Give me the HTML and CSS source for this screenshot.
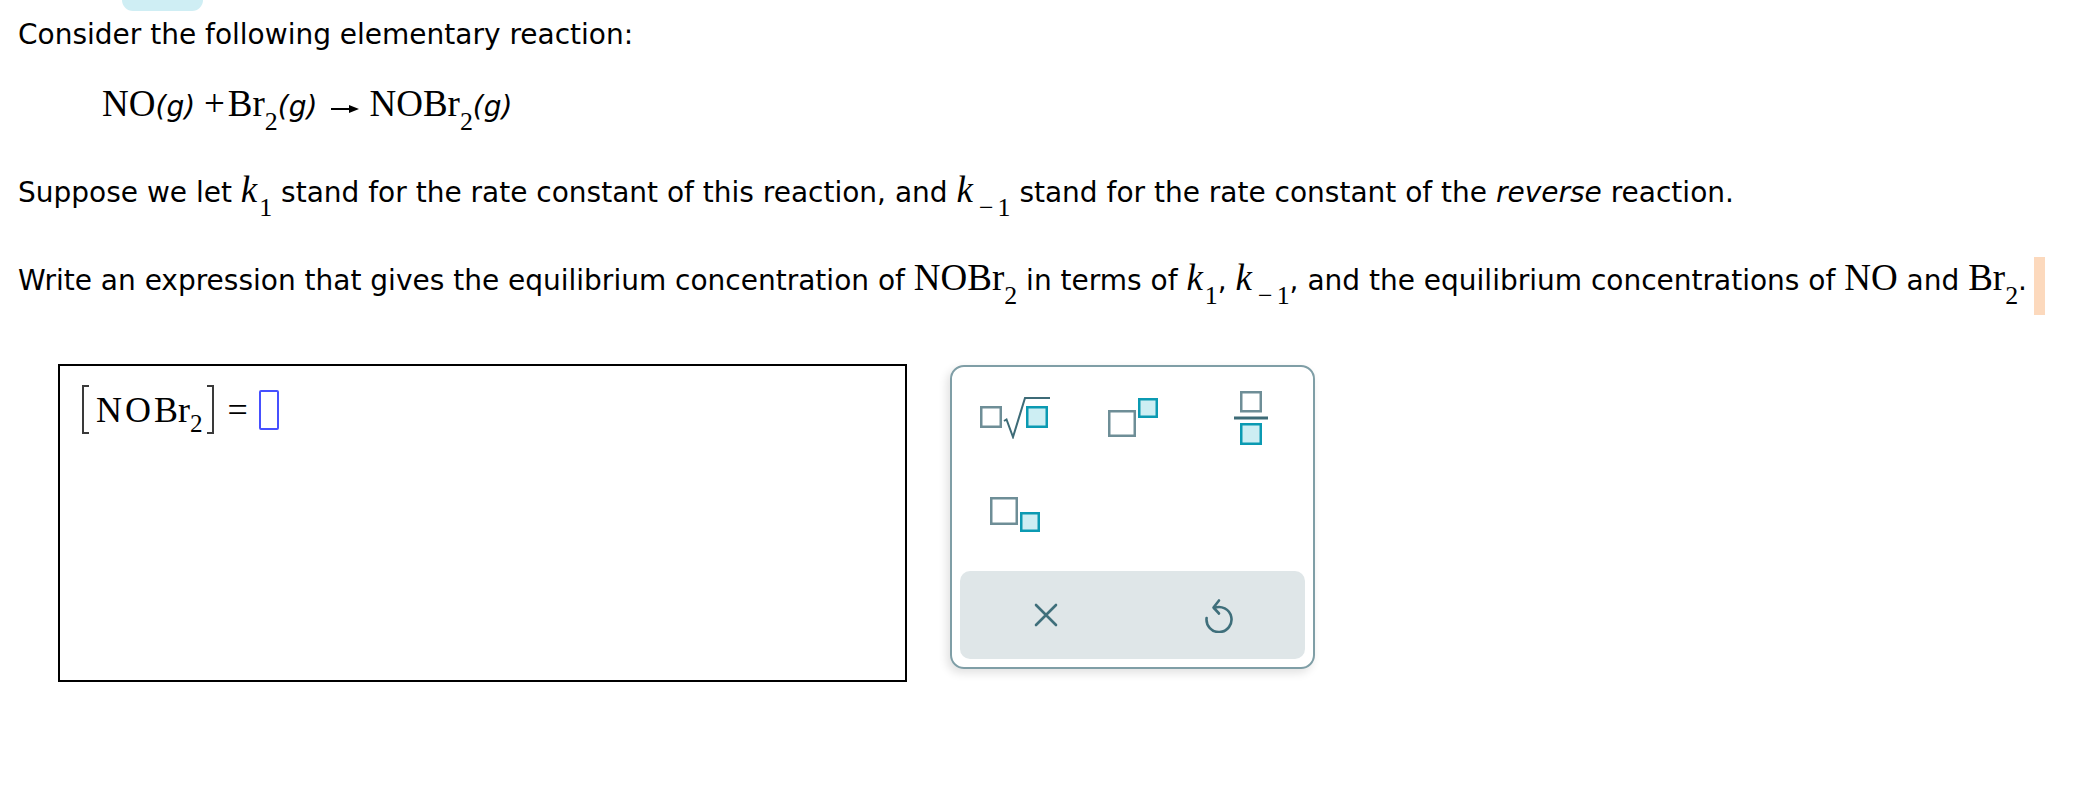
FILE: index.html
```html
<!DOCTYPE html>
<html lang="en">
<head>
    <meta charset="UTF-8">
    <meta name="viewport" content="width=device-width, initial-scale=1.0">
    <title>Elementary Reaction</title>
    <link rel="stylesheet" href="styles.css">
</head>
<body>
    <div class="tab"></div>

    <div class="question">
        <p class="intro">Consider the following elementary reaction:</p>
        <p class="reaction"><span class="chem">NO</span><span class="phase">(g)</span> <span class="chem"><span class="plus">+</span>Br<sub>2</sub></span><span class="phase">(g)</span><svg class="arrow" width="28" height="10" viewBox="0 0 28 10"><line x1="0" y1="5" x2="20" y2="5" stroke="#000" stroke-width="2"/><polygon points="18,1 28,5 18,9" fill="#000"/></svg><span class="chem">NOBr<sub>2</sub></span><span class="phase">(g)</span></p>
        <p class="suppose">Suppose we let <span class="m"><i>k</i><sub>1</sub></span> stand for the rate constant of this reaction, and <span class="m"><i>k</i><sub><span class="minus">−</span>1</sub></span> stand for the rate constant of the <em>reverse</em> reaction.</p>
        <p class="write">Write an expression that gives the equilibrium concentration of <span class="m">NOBr<sub>2</sub></span> in terms of <span class="m"><i>k</i><sub>1</sub></span>, <span class="m"><i>k</i><sub><span class="minus">−</span>1</sub></span>, and the equilibrium concentrations of <span class="m">NO</span> and <span class="m">Br<sub>2</sub></span>.<span class="caret"></span></p>
    </div>

    <div class="workspace">
        <div class="answer-box">
            <div class="entry">
                <span class="bracket left"></span>
                <span class="species"><span class="spaced">NO</span>Br<sub>2</sub></span>
                <span class="bracket right"></span>
                <span class="equals">=</span>
                <span class="slot"></span>
            </div>
        </div>

        <div class="palette">
            <div class="keys">
                <button class="key" title="root">
                    <svg width="70" height="42" viewBox="0 0 70 42">
                        <rect x="1.25" y="10.25" width="19.5" height="19.5" class="box"/>
                        <path d="M24 24 L26.5 22.5 L33 40 L45 1 L70 1" class="line" stroke-width="2"/>
                        <rect x="47.25" y="10.25" width="19.5" height="19.5" class="slot-box"/>
                    </svg>
                </button>
                <button class="key" title="power">
                    <svg width="50" height="40" viewBox="0 0 50 40">
                        <rect x="1.25" y="13.25" width="25.5" height="24.5" class="box"/>
                        <rect x="31.25" y="1.25" width="17.5" height="17.5" class="slot-box"/>
                    </svg>
                </button>
                <button class="key" title="fraction">
                    <svg width="34" height="54" viewBox="0 0 34 54">
                        <rect x="7.25" y="1.25" width="19.5" height="19" class="box"/>
                        <line x1="0" y1="27" x2="34" y2="27" class="line" stroke-width="3"/>
                        <rect x="7.25" y="33.25" width="19.5" height="19.5" class="slot-box"/>
                    </svg>
                </button>
                <button class="key" title="subscript">
                    <svg width="50" height="36" viewBox="0 0 50 36">
                        <rect x="1.25" y="1.25" width="25.5" height="25.5" class="box"/>
                        <rect x="31.25" y="16.25" width="17.5" height="17.5" class="slot-box"/>
                    </svg>
                </button>
            </div>
            <div class="actions">
                <button class="action" title="clear">
                    <svg width="24" height="24" viewBox="0 0 24 24">
                        <path d="M2 2 L22 22 M22 2 L2 22" class="tool"/>
                    </svg>
                </button>
                <button class="action" title="undo">
                    <svg width="28" height="36" viewBox="0 0 28 36">
                        <path d="M9.2 11 A12.5 12.5 0 1 1 1.6 21" class="tool"/>
                        <path d="M14 3.5 L8.5 10.5 L14 16.5" class="tool"/>
                    </svg>
                </button>
            </div>
        </div>
    </div>
</body>
</html>
```

FILE: styles.css
```css
:root {
    --frame: #7f9ea6;
    --box: #6e8e97;
    --teal: #0b9ab2;
    --teal-fill: #cdeef3;
    --ink: #3d6b77;
}

body {
    margin: 0;
    font-family: "DejaVu Sans", Verdana, sans-serif;
    font-size: 28px;
    color: #000;
    background: #fff;
}

.tab {
    width: 81px;
    height: 11px;
    margin-left: 122px;
    background: #cfeef4;
    border-radius: 0 0 14px 14px;
}

.question {
    padding: 0 18px;
}

.question p {
    margin: 0;
    line-height: 40px;
    white-space: nowrap;
}

.question .intro {
    margin-top: 4px;
}

.question .reaction {
    margin-top: 32px;
    padding-left: 84px;
}

.question .suppose {
    margin-top: 46px;
}

.question .write {
    margin-top: 48px;
}

.chem,
.m {
    font-family: "Liberation Serif", "Times New Roman", serif;
    font-size: 37px;
    line-height: 0;
}

.m i {
    margin-right: 2px;
}

.minus {
    margin: 0 4px 0 4px;
}

.plus {
    margin-right: 3px;
}

.phase {
    font-style: italic;
}

sub {
    font-size: 70%;
    vertical-align: -0.55em;
    line-height: 0;
}

.arrow {
    vertical-align: 2px;
    margin: 0 10px 0 14px;
}

/* highlight after the last sentence, kept out of the line box */
.caret {
    display: inline-block;
    width: 11px;
    height: 58px;
    margin: -20px 0 -20px 7px;
    background: #fcd9bd;
    vertical-align: -5px;
}

.workspace {
    display: flex;
    align-items: flex-start;
    gap: 43px;
    margin: 63px 0 0 58px;
}

.answer-box {
    box-sizing: border-box;
    width: 849px;
    height: 318px;
    border: 2px solid #000;
}

.entry {
    display: flex;
    align-items: center;
    height: 47px;
    margin: 20px 0 0 22px;
    font-family: "Liberation Serif", "Times New Roman", serif;
    font-size: 36px;
}

.bracket {
    width: 5px;
    height: 45px;
    border: 2px solid #3a3a3a;
}

.bracket.left {
    border-right: none;
}

.bracket.right {
    border-left: none;
}

.species {
    margin: 0 4px 0 7px;
    line-height: 1;
}

.species .spaced {
    letter-spacing: 3px;
}

.species sub {
    vertical-align: -0.4em;
}

.equals {
    margin: 0 11px 0 14px;
    line-height: 1;
}

.slot {
    width: 16px;
    height: 36px;
    border: 2px solid #4650ff;
    border-radius: 2px;
}

.palette {
    box-sizing: border-box;
    width: 365px;
    height: 304px;
    margin-top: 1px;
    padding: 8px;
    border: 2px solid var(--frame);
    border-radius: 14px;
    box-shadow: -3px 4px 10px rgba(0, 0, 0, 0.12);
    display: flex;
    flex-direction: column;
}

.keys {
    display: grid;
    grid-template-columns: 109px 128px 108px;
    grid-template-rows: 85px 85px;
    row-gap: 12px;
}

button {
    background: none;
    border: none;
    padding: 0;
    margin: 0;
    cursor: pointer;
}

.key,
.action {
    display: flex;
    align-items: center;
    justify-content: center;
}

.box {
    fill: none;
    stroke: var(--box);
    stroke-width: 2.5;
}

.slot-box {
    fill: var(--teal-fill);
    stroke: var(--teal);
    stroke-width: 2.5;
}

.line {
    fill: none;
    stroke: var(--ink);
}

.actions {
    display: flex;
    height: 88px;
    margin-top: 14px;
    background: #dfe6e8;
    border-radius: 10px;
}

.action {
    flex: 1;
}

.tool {
    fill: none;
    stroke: #3f6f7b;
    stroke-width: 2.6;
    stroke-linecap: round;
    stroke-linejoin: round;
}
```
